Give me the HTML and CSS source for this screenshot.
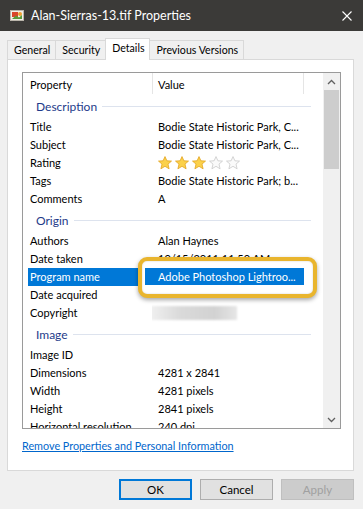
FILE: index.html
```html
<!DOCTYPE html>
<html>
<head>
    <title>Alan-Sierras-13.tif Properties</title>
    <link rel="stylesheet" href="styles.css">
</head>
<body>
    <div class="titlebar">
        <svg class="app-icon" width="14" height="11" viewBox="0 0 14 11">
            <rect x="0.5" y="0.5" width="13" height="10" fill="#f2efe9" stroke="#b9b4aa"/>
            <rect x="2" y="2" width="6" height="5" fill="#d9462b"/>
            <circle cx="10" cy="4" r="2" fill="#f0a030"/>
            <path d="M2 9 L6 5.5 L9 7.5 L12 5 L12 9 Z" fill="#5a9a3a"/>
        </svg>
        <span class="title">Alan-Sierras-13.tif Properties</span>
        <svg class="close" width="10" height="10" viewBox="0 0 10 10">
            <path d="M0.5 0.5 L9.5 9.5 M9.5 0.5 L0.5 9.5" stroke="#fff" stroke-width="1.1"/>
        </svg>
    </div>

    <div class="tabs">
        <div class="tab">General</div>
        <div class="tab">Security</div>
        <div class="tab active">Details</div>
        <div class="tab">Previous Versions</div>
    </div>

    <div class="panel">
        <div class="listbox">
            <div class="list-main">
                <div class="list-head">
                    <div class="head-prop">Property</div>
                    <div class="head-val">Value</div>
                </div>
                <div class="list-body">
                    <div class="group"><span>Description</span></div>
                    <div class="row"><div class="prop">Title</div><div class="val">Bodie State Historic Park, C...</div></div>
                    <div class="row"><div class="prop">Subject</div><div class="val">Bodie State Historic Park, C...</div></div>
                    <div class="row">
                        <div class="prop">Rating</div>
                        <div class="val">
                            <svg class="stars" width="84" height="14" viewBox="0 0 84 14">
                                <polygon class="on" points="7,0.6 8.9,4.8 13.5,5.1 10,8.1 11.1,12.8 7,10.3 2.9,12.8 4,8.1 0.5,5.1 5.1,4.8"/>
                                <polygon class="on" transform="translate(17 0)" points="7,0.6 8.9,4.8 13.5,5.1 10,8.1 11.1,12.8 7,10.3 2.9,12.8 4,8.1 0.5,5.1 5.1,4.8"/>
                                <polygon class="on" transform="translate(34 0)" points="7,0.6 8.9,4.8 13.5,5.1 10,8.1 11.1,12.8 7,10.3 2.9,12.8 4,8.1 0.5,5.1 5.1,4.8"/>
                                <polygon class="off" transform="translate(51 0)" points="7,0.6 8.9,4.8 13.5,5.1 10,8.1 11.1,12.8 7,10.3 2.9,12.8 4,8.1 0.5,5.1 5.1,4.8"/>
                                <polygon class="off" transform="translate(68 0)" points="7,0.6 8.9,4.8 13.5,5.1 10,8.1 11.1,12.8 7,10.3 2.9,12.8 4,8.1 0.5,5.1 5.1,4.8"/>
                            </svg>
                        </div>
                    </div>
                    <div class="row"><div class="prop">Tags</div><div class="val">Bodie State Historic Park; b...</div></div>
                    <div class="row"><div class="prop">Comments</div><div class="val">A</div></div>

                    <div class="group"><span>Origin</span></div>
                    <div class="row"><div class="prop">Authors</div><div class="val">Alan Haynes</div></div>
                    <div class="row"><div class="prop">Date taken</div><div class="val">10/15/2011 11:50 AM</div></div>
                    <div class="row selected"><div class="prop">Program name</div><div class="val">Adobe Photoshop Lightroo...</div></div>
                    <div class="row"><div class="prop">Date acquired</div><div class="val"></div></div>
                    <div class="row"><div class="prop">Copyright</div><div class="val"><div class="blurred"></div></div></div>

                    <div class="group"><span>Image</span></div>
                    <div class="row"><div class="prop">Image ID</div><div class="val"></div></div>
                    <div class="row"><div class="prop">Dimensions</div><div class="val">4281 x 2841</div></div>
                    <div class="row"><div class="prop">Width</div><div class="val">4281 pixels</div></div>
                    <div class="row"><div class="prop">Height</div><div class="val">2841 pixels</div></div>
                    <div class="row"><div class="prop">Horizontal resolution</div><div class="val">240 dpi</div></div>
                </div>
            </div>
            <div class="scrollbar">
                <div class="arrow">
                    <svg width="9" height="6" viewBox="0 0 9 6"><path d="M1 5 L4.5 1.5 L8 5" fill="none" stroke="#606060" stroke-width="1.3"/></svg>
                </div>
                <div class="thumb"></div>
                <div class="track"></div>
                <div class="arrow">
                    <svg width="9" height="6" viewBox="0 0 9 6"><path d="M1 1 L4.5 4.5 L8 1" fill="none" stroke="#606060" stroke-width="1.3"/></svg>
                </div>
            </div>
        </div>
        <a class="remove-link" href="#">Remove Properties and Personal Information</a>

        <div class="callout">
            <div class="callout-bar">Adobe Photoshop Lightroo...</div>
        </div>
    </div>

    <div class="buttons">
        <button class="btn default">OK</button>
        <button class="btn">Cancel</button>
        <button class="btn disabled">Apply</button>
    </div>
</body>
</html>
```

FILE: styles.css
```css
body {
    margin: 0;
    width: 363px;
    height: 509px;
    overflow: hidden;
    background: #f0f0f0;
    font-family: Lato, "Noto Sans", sans-serif;
    font-size: 11px;
    color: #000;
}
.titlebar {
    height: 31px;
    background: #3b3a38;
    display: flex;
    align-items: center;
    padding: 0 11px 0 10px;
}
.app-icon {
    margin-right: 7px;
}
.title {
    flex: 1;
    color: #fff;
    font-size: 12.5px;
}
.tabs {
    display: flex;
    align-items: flex-end;
    height: 21px;
    margin-top: 7px;
    padding-left: 7px;
    position: relative;
    z-index: 1;
    font-size: 10.6px;
}
.tab {
    height: 19px;
    line-height: 18px;
    padding: 0 5px 0 6px;
    border: 1px solid #d9d9d9;
    border-bottom: none;
    border-left: none;
    box-sizing: border-box;
}
.tab:first-child {
    border-left: 1px solid #d9d9d9;
}
.tab.active {
    height: 22px;
    line-height: 19px;
    margin-bottom: -1px;
    background: #fff;
    border-left: 1px solid #d9d9d9;
    margin-left: -1px;
}
.panel {
    position: relative;
    height: 412px;
    margin-left: 7px;
    width: 347px;
    box-sizing: border-box;
    background: #fff;
    border: 1px solid #d9d9d9;
    padding: 12px 0 0 14px;
}
.listbox {
    display: flex;
    width: 319px;
    height: 357px;
    box-sizing: border-box;
    border: 1px solid #9a9a9a;
    overflow: hidden;
}
.list-main {
    flex: 1;
    overflow: hidden;
}
.list-head {
    display: flex;
    height: 21px;
}
.head-prop,
.head-val {
    box-sizing: border-box;
    border-right: 1px solid #e5e5e5;
    padding-top: 3px;
    line-height: 18px;
}
.head-prop {
    width: 130px;
    padding-left: 7px;
}
.head-val {
    width: 151px;
    padding-left: 5px;
}
.group {
    display: flex;
    align-items: center;
    height: 24px;
    padding-left: 13px;
    margin-right: 12px;
    color: #1e3b8a;
    font-size: 12px;
}
.group::after {
    content: "";
    flex: 1;
    height: 1px;
    margin-left: 5px;
    background: #dde3ee;
}
.row {
    display: flex;
    height: 18px;
    line-height: 18px;
    width: 276px;
    margin-left: 5px;
    white-space: nowrap;
}
.row.selected {
    background: #0078d7;
    color: #fff;
}
.prop {
    width: 124px;
    padding-left: 2px;
    box-sizing: border-box;
    overflow: hidden;
}
.val {
    flex: 1;
    padding-left: 6px;
    overflow: hidden;
    display: flex;
    align-items: center;
}
.stars .on {
    fill: #fbd14b;
    stroke: #e2a31e;
    stroke-width: 0.8;
}
.stars .off {
    fill: #fafafa;
    stroke: #c9c9c9;
    stroke-width: 0.8;
}
.blurred {
    width: 89px;
    height: 14px;
    margin-left: -10px;
    background: linear-gradient(to right, #f2f2f2, #dadada 35%, #d2d2d2 75%, #e6e6e6);
    filter: blur(0.8px);
}
.scrollbar {
    width: 17px;
    background: #f0f0f0;
    display: flex;
    flex-direction: column;
}
.arrow {
    height: 17px;
    display: flex;
    align-items: center;
    justify-content: center;
}
.thumb {
    height: 79px;
    margin: 0 1px;
    background: #cdcdcd;
}
.track {
    flex: 1;
}
.remove-link {
    display: inline-block;
    margin-top: 9px;
    line-height: 16px;
    color: #0066cc;
    font-size: 10.8px;
}
.callout {
    position: absolute;
    left: 130px;
    top: 197px;
    width: 179px;
    height: 41px;
    box-sizing: border-box;
    border: 4px solid #e9b52e;
    border-radius: 9px;
    background: #fff;
    box-shadow: 0 2px 4px rgba(0,0,0,0.35), inset 0 0 2px rgba(0,0,0,0.2);
    padding: 7px 0 0 3px;
}
.callout-bar {
    width: 159px;
    height: 17px;
    line-height: 17px;
    background: #0078d7;
    color: #fff;
    padding-left: 13px;
    box-sizing: border-box;
    white-space: nowrap;
    overflow: hidden;
}
.buttons {
    display: flex;
    justify-content: flex-end;
    gap: 8px;
    margin-top: 8px;
    padding-right: 9px;
}
.btn {
    width: 73px;
    height: 21px;
    padding: 0;
    font-family: Lato, "Noto Sans", sans-serif;
    font-size: 11.5px;
    color: #000;
    background: #e1e1e1;
    border: 1px solid #adadad;
}
.btn.default {
    border-color: #0078d7;
    box-shadow: inset 0 0 0 1px #0078d7;
}
.btn.disabled {
    background: #cccccc;
    border-color: #bfbfbf;
    color: #a0a0a0;
}
```
